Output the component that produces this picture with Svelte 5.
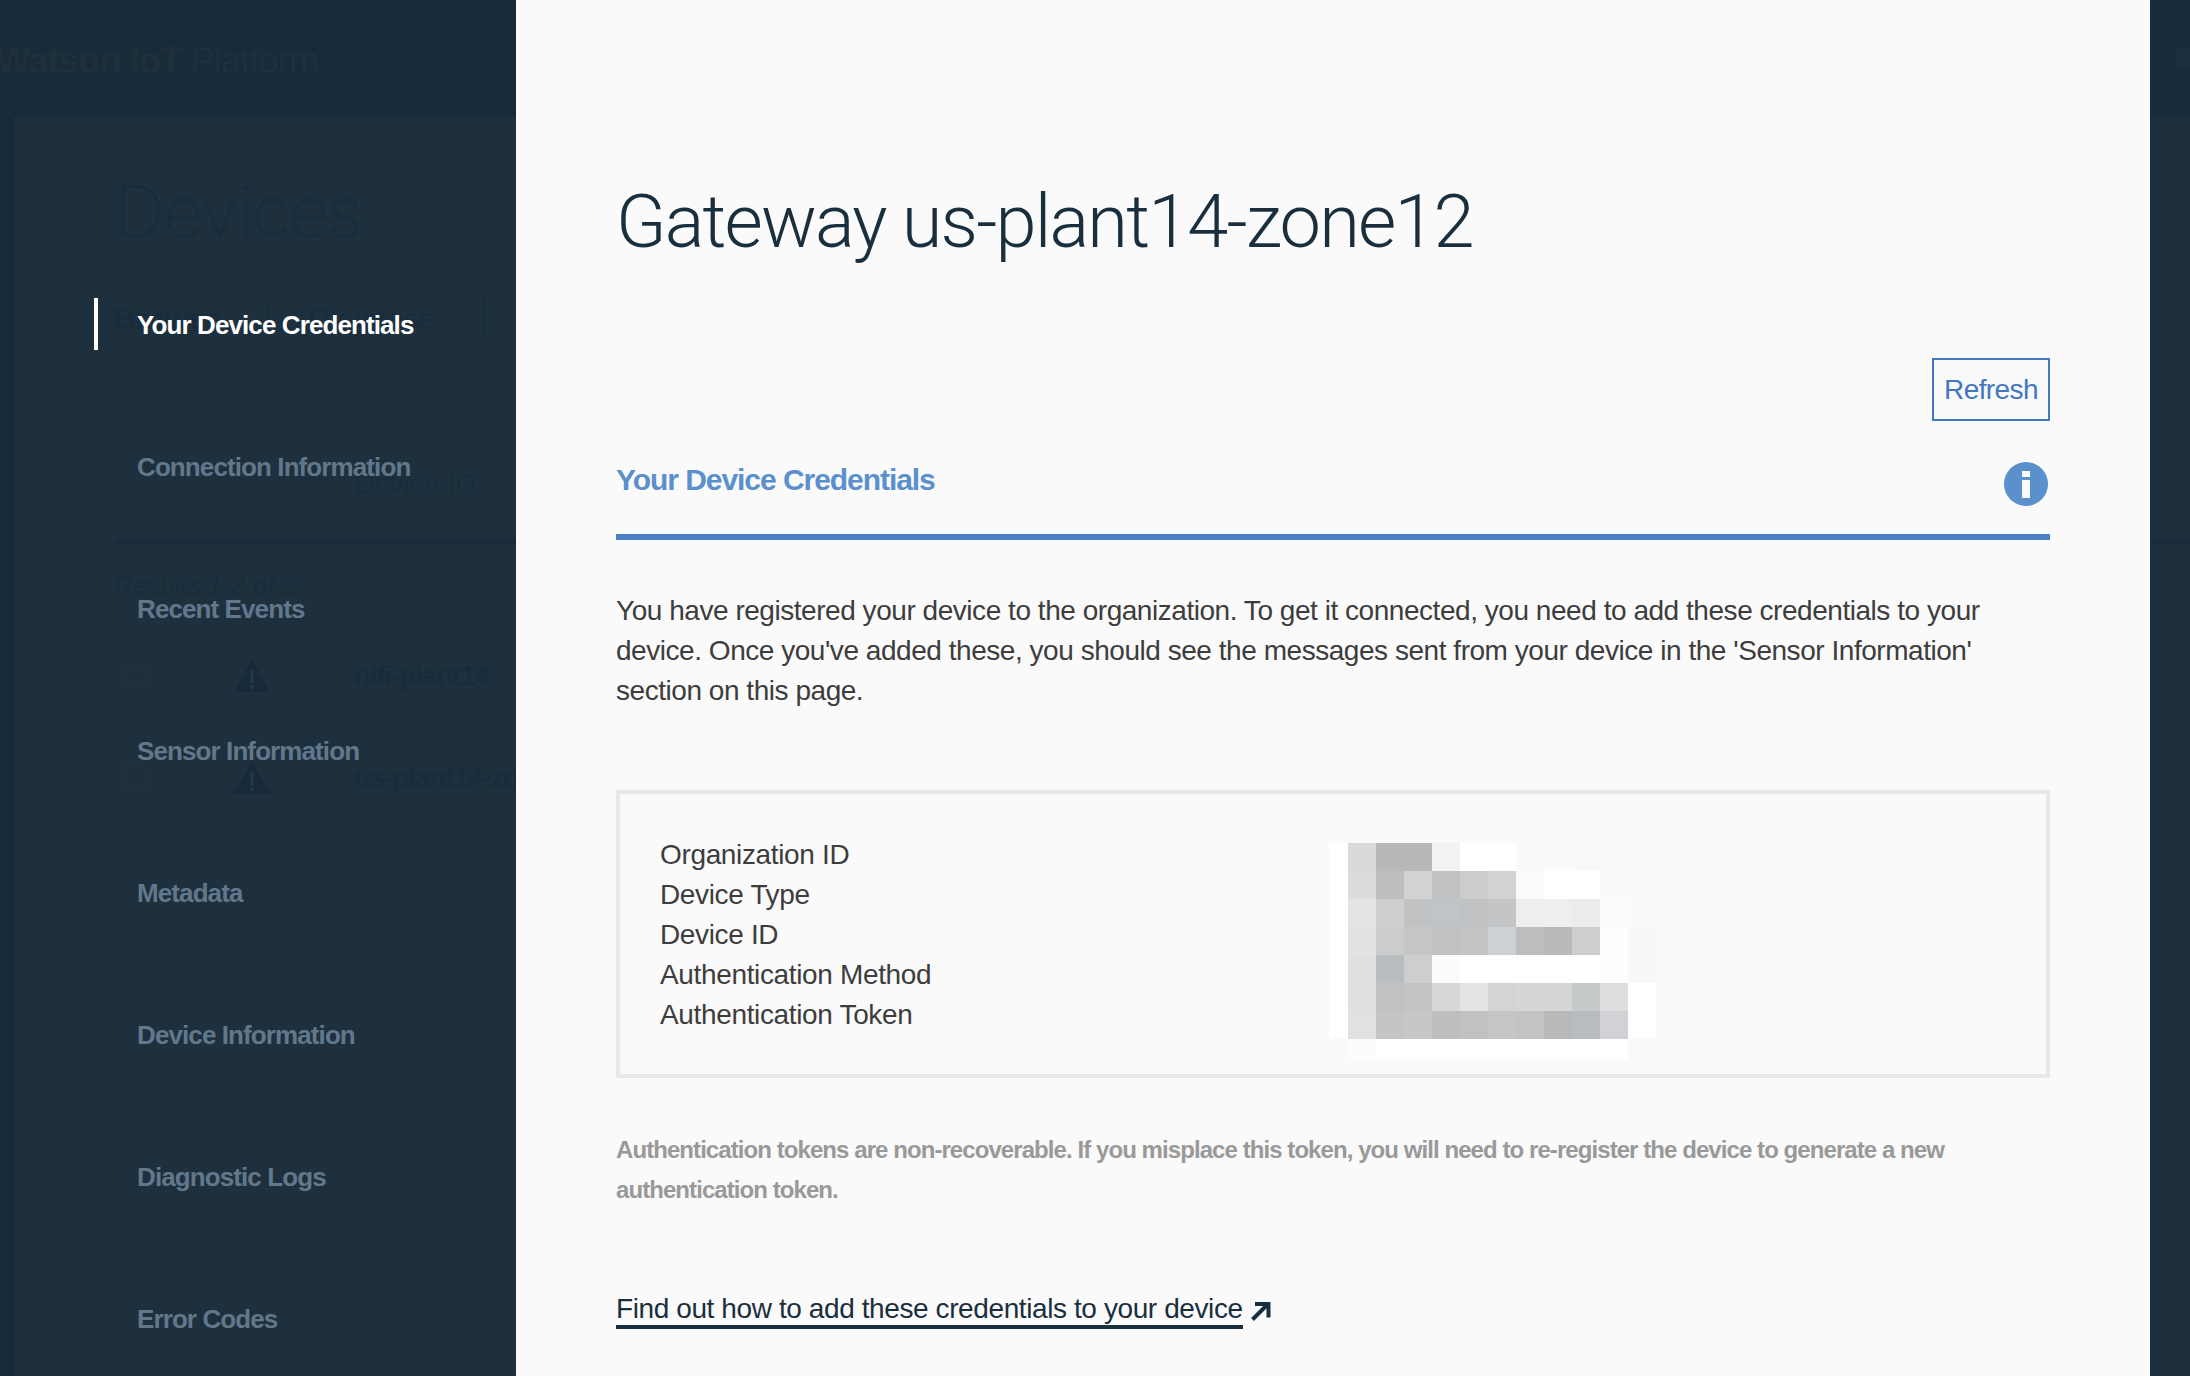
<script lang="ts">
  const navItems = [
    'Your Device Credentials',
    'Connection Information',
    'Recent Events',
    'Sensor Information',
    'Metadata',
    'Device Information',
    'Diagnostic Logs',
    'Error Codes',
  ];

  const credentialLabels = [
    'Organization ID',
    'Device Type',
    'Device ID',
    'Authentication Method',
    'Authentication Token',
  ];

  // Blurred-out credential values, sampled cell by cell.
  const pixelRows = [
    ['#fff', '#dadada', '#b7b8ba', '#b7b8ba', '#f3f3f3', '#fff', '#fff', '#fafafa', '#fafafa', '#f9f9f9', '#fafafa', '#fafafa'],
    ['#fff', '#dcdcdc', '#bcbdbf', '#d1d3d3', '#c0c2c4', '#cbcdcd', '#d1d3d3', '#fbfbfb', '#fff', '#fff', '#fafafa', '#fafafa'],
    ['#fff', '#e4e4e4', '#cdcfcf', '#bfc1c3', '#c0c4c6', '#bfc1c3', '#c3c5c7', '#eee', '#eee', '#ececec', '#fbfbfb', '#fafafa'],
    ['#fff', '#e2e2e2', '#cbcdcd', '#c4c6c8', '#bfc1c3', '#c2c4c6', '#cdd1d3', '#bcbdbf', '#b9babc', '#cdcfce', '#fefefe', '#f8f8f8'],
    ['#fff', '#dfe1e1', '#b9bdbf', '#cdcfcf', '#fbfbfb', '#fff', '#fff', '#fff', '#fff', '#fff', '#fefefe', '#f8f8f8'],
    ['#fff', '#e0e0e0', '#bfc1c3', '#c1c3c5', '#d6d8d8', '#e3e3e3', '#d3d5d5', '#d5d7d7', '#d5d7d7', '#c7caca', '#dedede', '#fff'],
    ['#fff', '#e0e2e2', '#c3c5c7', '#c5c7c9', '#bcbec0', '#bfc1c3', '#c4c6c8', '#c2c4c6', '#b8b9bb', '#b7bcbe', '#d0d2d5', '#fff'],
    ['#f9f9f9', '#fcfcfc', '#fff', '#fff', '#fff', '#fff', '#fff', '#fff', '#fff', '#fff', '#fff', '#f9f9f9'],
  ];
</script>

<div class="page">
  <header class="topbar">
    <span class="brand"><b>Watson IoT</b> Platform</span>
    <span class="menu-glyph"></span>
  </header>
  <main class="backdrop">
    <h1>Devices</h1>
    <div class="tabs">
      <span class="tab strong">Browse</span>
      <span class="tab">Diagnose</span>
    </div>
    <div class="col-head">Device ID</div>
    <p class="results">Results 1-2 of 2</p>
    {#each ['nifi-plant14', 'us-plant14-zone12'] as name}
      <div class="device">
        <span class="check"></span>
        <svg class="warn" viewBox="0 0 36 32" width="36" height="32" aria-hidden="true">
          <path d="M18 0 36 32H0Z" fill="#182a39" />
          <rect x="16.5" y="10" width="3" height="13" fill="#25394a" />
          <rect x="16.5" y="25" width="3" height="4" fill="#25394a" />
        </svg>
        <span class="device-name">{name}</span>
      </div>
    {/each}
  </main>

  <div class="overlay">
    <nav class="side">
      {#each navItems as item, i}
        <a class="nav-item" class:active={i === 0} href="#top">{item}</a>
      {/each}
    </nav>
    <section class="sheet">
      <h2 class="title">Gateway us-plant14-zone12</h2>
      <div class="actions"><button class="refresh">Refresh</button></div>
      <div class="section-head">
        <h3>Your Device Credentials</h3>
        <svg viewBox="0 0 44 44" width="44" height="44" aria-hidden="true">
          <circle cx="22" cy="22" r="22" fill="#5a90cc" />
          <rect x="18" y="9" width="8" height="6" fill="#fafafa" />
          <rect x="18" y="18" width="8" height="18" fill="#fafafa" />
        </svg>
      </div>
      <p class="intro">
        You have registered your device to the organization. To get it connected, you need to add these credentials to your device. Once you've added these, you should see the messages sent from your device in the 'Sensor Information' section on this page.
      </p>
      <div class="cred-box">
        <ul class="labels">
          {#each credentialLabels as label}
            <li>{label}</li>
          {/each}
        </ul>
        <div class="pixels" aria-hidden="true">
          {#each pixelRows as row}
            {#each row as c}
              <span style="background:{c}"></span>
            {/each}
          {/each}
        </div>
      </div>
      <p class="note">
        Authentication tokens are non-recoverable. If you misplace this token, you will need to re-register the device to generate a new authentication token.
      </p>
      <div class="link-row">
        <a class="doc-link" href="#top">Find out how to add these credentials to your device</a>
        <svg viewBox="0 0 20 20" width="20" height="20" aria-hidden="true">
          <path d="M1.5 18.5 16 4M4 3h13.5v13.5" fill="none" stroke="#1a2f3e" stroke-width="4" />
        </svg>
      </div>
    </section>
  </div>
</div>

<style>
  :global(body) {
    margin: 0;
    background: #172a39;
    overflow: hidden;
  }
  .page {
    position: relative;
    width: 2190px;
    height: 1376px;
    overflow: hidden;
    font-family: "Liberation Sans", Arial, sans-serif;
  }
  .topbar {
    height: 117px;
    display: flex;
    align-items: center;
    justify-content: space-between;
    margin-left: -4px;
    padding-top: 4px;
    box-sizing: border-box;
    background: #172b3a;
  }
  .brand {
    font-size: 36.5px;
    letter-spacing: -1px;
    color: #1c3040;
  }
  .brand b {
    color: #1f303b;
  }
  .menu-glyph {
    width: 14px;
    height: 21px;
    margin-top: -4px;
    background: #1a2f3e;
  }
  .backdrop {
    margin-left: 14px;
    height: 1259px;
    padding: 52px 0 0 100px;
    box-sizing: border-box;
    background: #1e303d;
    color: #192c3b;
  }
  h1 {
    margin: 0;
    font-size: 71px;
    line-height: 84px;
    font-family: Inter, sans-serif;
    font-weight: 200;
    letter-spacing: -2px;
  }
  .tabs {
    display: flex;
    margin-top: 44px;
    height: 44px;
    align-items: center;
  }
  .tab {
    font-size: 30px;
    padding: 4px 48px 4px 40px;
    border-right: 2px solid #1a2d3b;
  }
  .tab:first-child {
    padding: 4px 44px 4px 0;
  }
  .strong {
    font-weight: 700;
  }
  .col-head {
    margin-top: 127px;
    padding: 0 0 39px 240px;
    border-bottom: 5px solid #1a2c3b;
    font-size: 28px;
    line-height: 32px;
  }
  .results {
    margin: 26px 0 56px;
    font-size: 26px;
    line-height: 30px;
    font-style: italic;
  }
  .device {
    display: flex;
    align-items: center;
    height: 40px;
    margin-bottom: 62px;
  }
  .check {
    width: 22px;
    height: 22px;
    margin-left: 7px;
    border: 1px solid #21323e;
    border-radius: 3px;
  }
  .warn {
    margin-left: 89px;
  }
  .device-name {
    margin-left: 84px;
    font-size: 28px;
    font-weight: 700;
    letter-spacing: -1.2px;
    white-space: nowrap;
  }
  .overlay {
    position: absolute;
    inset: 0 40px 0 0;
    display: flex;
  }
  .side {
    width: 516px;
    flex: none;
    padding: 298px 0 0 94px;
    box-sizing: border-box;
    display: flex;
    flex-direction: column;
    gap: 90px;
  }
  .nav-item {
    display: flex;
    align-items: center;
    height: 52px;
    padding: 2px 0 0 43px;
    box-sizing: border-box;
    font-size: 26px;
    font-weight: 700;
    letter-spacing: -0.9px;
    color: #61788c;
    text-decoration: none;
    white-space: nowrap;
  }
  .nav-item.active {
    padding-left: 39px;
    border-left: 4px solid #fff;
    color: #fff;
  }
  .sheet {
    flex: 1;
    padding: 172px 100px 0;
    background: #fafafa;
    color: #3d3d3d;
  }
  .title {
    margin: 0;
    font-size: 74px;
    line-height: 100px;
    font-family: Roboto, sans-serif;
    font-weight: 300;
    letter-spacing: -1.85px;
    color: #1a2f3e;
  }
  .actions {
    display: flex;
    justify-content: flex-end;
    margin-top: 86px;
  }
  .refresh {
    width: 118px;
    height: 63px;
    padding: 0;
    background: none;
    border: 2px solid #4178be;
    font: inherit;
    font-size: 28px;
    letter-spacing: -0.6px;
    color: #4178be;
  }
  .section-head {
    display: flex;
    justify-content: space-between;
    align-items: center;
    height: 119px;
    box-sizing: border-box;
    padding: 10px 0 0;
    border-bottom: 6px solid #4a81c4;
  }
  .section-head svg {
    margin: 2px 2px 0 0;
  }
  h3 {
    margin: 0 0 5px;
    font-size: 30px;
    letter-spacing: -1.05px;
    color: #5a90cc;
  }
  .intro {
    margin: 51px 0 0;
    font-size: 28px;
    line-height: 40px;
    letter-spacing: -0.46px;
  }
  .cred-box {
    display: flex;
    margin-top: 79px;
    height: 288px;
    box-sizing: border-box;
    padding: 41px 40px;
    border: 4px solid #e8e8e8;
  }
  .labels {
    width: 669px;
    flex: none;
    margin: 0;
    padding: 0;
    list-style: none;
    font-size: 28px;
    line-height: 40px;
    letter-spacing: -0.35px;
  }
  .pixels {
    display: grid;
    grid-template-columns: 19px repeat(11, 28px);
    grid-template-rows: repeat(7, 28px) 20px;
    margin-top: 8px;
  }
  .note {
    margin: 52px 0 0;
    font-size: 24px;
    line-height: 40px;
    font-weight: 700;
    letter-spacing: -0.93px;
    color: #999;
  }
  .link-row {
    display: flex;
    align-items: center;
    gap: 8px;
    margin-top: 82px;
  }
  .doc-link {
    font-size: 28px;
    line-height: 33px;
    letter-spacing: -0.4px;
    color: #1a2f3e;
    text-decoration: none;
    border-bottom: 4px solid #1a2f3e;
  }
</style>
